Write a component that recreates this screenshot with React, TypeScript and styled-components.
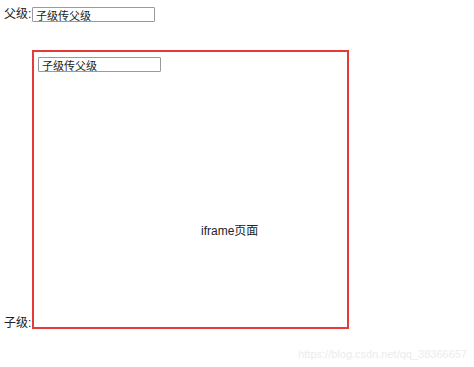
import styled, { createGlobalStyle } from "styled-components";

const GlobalStyle = createGlobalStyle`
  body {
    margin: 0;
    background: #fff;
    font-family: "Liberation Sans", "Noto Sans CJK SC", sans-serif;
    font-size: 12px;
    color: #222;
  }
`;

const Page = styled.div`
  width: 474px;
  height: 367px;
  padding: 7px 0 0 4px;
  box-sizing: border-box;
  display: flex;
  flex-direction: column;
`;

const Row = styled.div<{ $top?: number; $end?: boolean }>`
  display: flex;
  align-items: ${(p) => (p.$end ? "flex-end" : "center")};
  margin-top: ${(p) => p.$top ?? 0}px;
`;

const Label = styled.span<{ $drop?: number }>`
  width: 28px;
  line-height: 15px;
  white-space: nowrap;
  margin-bottom: ${(p) => -(p.$drop ?? 0)}px;
`;

const TextInput = styled.input`
  width: 123px;
  height: 15px;
  box-sizing: border-box;
  border: 1px solid #9a9a9a;
  border-radius: 1px;
  padding: 0 3px;
  font-family: "Liberation Sans", "Noto Sans CJK SC", sans-serif;
  font-size: 11px;
  color: #222;
  outline: none;
`;

const Frame = styled.div`
  width: 317px;
  height: 279px;
  box-sizing: border-box;
  border: 2px solid #e43a3a;
  padding: 5px 0 0 4px;
  display: flex;
  flex-direction: column;
`;

const FrameText = styled.div`
  margin: 152px 0 0 163px;
  font-size: 12px;
  line-height: 14px;
`;

const Watermark = styled.div`
  margin-top: 19px;
  padding-right: 7px;
  text-align: right;
  font-size: 11px;
  color: #ececec;
`;

export default function App() {
  return (
    <>
      <GlobalStyle />
      <Page>
        <Row>
          <Label>父级:</Label>
          <TextInput defaultValue="子级传父级" />
        </Row>
        <Row $top={28} $end>
          <Label $drop={2}>子级:</Label>
          <Frame>
            <TextInput defaultValue="子级传父级" />
            <FrameText>iframe页面</FrameText>
          </Frame>
        </Row>
        <Watermark>https://blog.csdn.net/qq_38366657</Watermark>
      </Page>
    </>
  );
}
